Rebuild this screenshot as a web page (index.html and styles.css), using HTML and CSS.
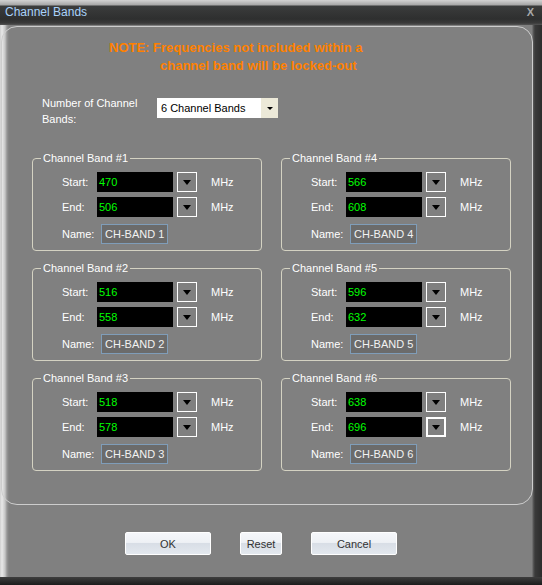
FILE: index.html
```html
<!DOCTYPE html>
<html lang="en">
<head>
    <meta charset="UTF-8">
    <title>Channel Bands</title>
    <link rel="stylesheet" href="styles.css">
</head>
<body>
    <div class="window">
        <div class="titlebar">
            <span class="title">Channel Bands</span>
            <span class="close">X</span>
        </div>

        <div class="client">
            <div class="panel">
                <p class="note">
                    <span>NOTE: Frequencies not included within a</span>
                    <span class="note-second">channel band will be locked-out</span>
                </p>

                <div class="count-row">
                    <label class="count-label">Number of Channel Bands:</label>
                    <div class="combo">
                        <span class="combo-value">6 Channel Bands</span>
                        <span class="combo-arrow"><i class="tri-small"></i></span>
                    </div>
                </div>

                <div class="bands">
                    <fieldset class="band">
                        <legend>Channel Band #1</legend>
                        <div class="band-rows">
                            <span class="label">Start:</span><span class="freq">470</span><span class="drop-btn"><i class="tri"></i></span><span class="unit">MHz</span>
                            <span class="label">End:</span><span class="freq">506</span><span class="drop-btn"><i class="tri"></i></span><span class="unit">MHz</span>
                            <span class="label name-label">Name:</span><span class="name-field">CH-BAND 1</span>
                        </div>
                    </fieldset>

                    <fieldset class="band">
                        <legend>Channel Band #4</legend>
                        <div class="band-rows">
                            <span class="label">Start:</span><span class="freq">566</span><span class="drop-btn"><i class="tri"></i></span><span class="unit">MHz</span>
                            <span class="label">End:</span><span class="freq">608</span><span class="drop-btn"><i class="tri"></i></span><span class="unit">MHz</span>
                            <span class="label name-label">Name:</span><span class="name-field">CH-BAND 4</span>
                        </div>
                    </fieldset>

                    <fieldset class="band">
                        <legend>Channel Band #2</legend>
                        <div class="band-rows">
                            <span class="label">Start:</span><span class="freq">516</span><span class="drop-btn"><i class="tri"></i></span><span class="unit">MHz</span>
                            <span class="label">End:</span><span class="freq">558</span><span class="drop-btn"><i class="tri"></i></span><span class="unit">MHz</span>
                            <span class="label name-label">Name:</span><span class="name-field">CH-BAND 2</span>
                        </div>
                    </fieldset>

                    <fieldset class="band">
                        <legend>Channel Band #5</legend>
                        <div class="band-rows">
                            <span class="label">Start:</span><span class="freq">596</span><span class="drop-btn"><i class="tri"></i></span><span class="unit">MHz</span>
                            <span class="label">End:</span><span class="freq">632</span><span class="drop-btn"><i class="tri"></i></span><span class="unit">MHz</span>
                            <span class="label name-label">Name:</span><span class="name-field">CH-BAND 5</span>
                        </div>
                    </fieldset>

                    <fieldset class="band">
                        <legend>Channel Band #3</legend>
                        <div class="band-rows">
                            <span class="label">Start:</span><span class="freq">518</span><span class="drop-btn"><i class="tri"></i></span><span class="unit">MHz</span>
                            <span class="label">End:</span><span class="freq">578</span><span class="drop-btn"><i class="tri"></i></span><span class="unit">MHz</span>
                            <span class="label name-label">Name:</span><span class="name-field">CH-BAND 3</span>
                        </div>
                    </fieldset>

                    <fieldset class="band">
                        <legend>Channel Band #6</legend>
                        <div class="band-rows">
                            <span class="label">Start:</span><span class="freq">638</span><span class="drop-btn"><i class="tri"></i></span><span class="unit">MHz</span>
                            <span class="label">End:</span><span class="freq">696</span><span class="drop-btn focused"><i class="tri"></i></span><span class="unit">MHz</span>
                            <span class="label name-label">Name:</span><span class="name-field">CH-BAND 6</span>
                        </div>
                    </fieldset>
                </div>
            </div>

            <div class="actions">
                <button class="btn btn-wide">OK</button>
                <button class="btn">Reset</button>
                <button class="btn btn-wide">Cancel</button>
            </div>
        </div>

        <div class="window-bottom"></div>
    </div>
</body>
</html>
```

FILE: styles.css
```css
body {
    margin: 0;
    font-family: "Liberation Sans", Arial, sans-serif;
    font-size: 11px;
    background-color: #808080;
}

.window {
    width: 542px;
    height: 585px;
    display: flex;
    flex-direction: column;
    background: linear-gradient(to right, #cfcfcf 0, #e8e8e8 2px, #c6c6c6 5px, #959595 7px, #808080 9px, #808080 532px, #5c5c5c 533px, #3a3a3a 535px, #2c2c2c 542px);
}

/* title bar */
.titlebar {
    height: 25px;
    box-sizing: border-box;
    padding: 5px 8px 0 5px;
    display: flex;
    justify-content: space-between;
    background: linear-gradient(to bottom, #d2d2d2 0, #a6a6a6 5px, #3b3c3c 6px, #2e2f2f 19px, #3a3a3a 23px, #555 25px);
}

.title {
    color: #a9d2fa;
    font-size: 12px;
    line-height: 14px;
}

.close {
    color: #a8a8a8;
    font-weight: bold;
    font-size: 11px;
    line-height: 14px;
}

.client {
    flex: 1;
    display: flex;
    flex-direction: column;
}

.panel {
    height: 479px;
    box-sizing: border-box;
    margin: 1px 9px 0 1px;
    padding-top: 12px;
    border: 1px solid #cdcdcd;
    border-radius: 16px;
}

.note {
    margin: 0 0 0 107px;
    color: #ff8000;
    font-weight: bold;
    font-size: 13px;
    line-height: 18px;
}

.note span {
    display: block;
}

.note-second {
    padding-left: 51px;
}

/* number of bands */
.count-row {
    display: flex;
    align-items: flex-start;
    margin: 20px 0 0 40px;
}

.count-label {
    width: 115px;
    color: #fff;
    line-height: 16px;
    padding-right: 10px;
    box-sizing: border-box;
}

.combo {
    margin-top: 3px;
    width: 121px;
    height: 20px;
    display: flex;
    background: #fff;
}

.combo-value {
    flex: 1;
    padding-left: 4px;
    line-height: 20px;
    color: #000;
}

.combo-arrow {
    width: 17px;
    background: #ece9d8;
    display: flex;
    align-items: center;
    justify-content: center;
}

.tri-small {
    border-left: 3px solid transparent;
    border-right: 3px solid transparent;
    border-top: 3px solid #000;
}

/* band groups */
.bands {
    display: grid;
    grid-template-columns: 230px 230px;
    column-gap: 19px;
    row-gap: 11px;
    margin: 25px 0 0 30px;
}

.band {
    margin: 0;
    padding: 7px 0 6px 8px;
    min-width: 0;
    border: 1px solid #d4d2c2;
    border-radius: 4px;
}

.band legend {
    padding: 0 2px;
    color: #fff;
    font-size: 11px;
    line-height: 13px;
}

.band-rows {
    display: grid;
    grid-template-columns: 31px 76px 20px auto;
    column-gap: 4px;
    row-gap: 5px;
    align-items: center;
    padding-left: 21px;
}

.label {
    color: #fff;
}

.freq {
    height: 20px;
    box-sizing: border-box;
    padding-left: 2px;
    line-height: 20px;
    background: #000;
    color: #00ff00;
}

.drop-btn {
    width: 20px;
    height: 20px;
    box-sizing: border-box;
    border: 1px solid #fff;
    display: flex;
    align-items: center;
    justify-content: center;
}

.drop-btn.focused {
    border-width: 2px;
}

.tri {
    border-left: 4px solid transparent;
    border-right: 4px solid transparent;
    border-top: 5px solid #000;
}

.unit {
    margin-left: 10px;
    color: #fff;
}

.name-label {
    margin-top: 2px;
}

.name-field {
    grid-column: 2 / span 3;
    width: 67px;
    height: 20px;
    box-sizing: border-box;
    margin: 2px 0 0 4px;
    padding-left: 3px;
    border: 1px solid #7f9db9;
    background: #6b6b6b;
    color: #f2f2f2;
    font-size: 11px;
    line-height: 18px;
    white-space: nowrap;
}

/* dialog buttons */
.actions {
    display: flex;
    gap: 29px;
    margin-top: 27px;
    padding-left: 125px;
}

.btn {
    height: 23px;
    width: 42px;
    padding: 0;
    font-family: "Liberation Sans", Arial, sans-serif;
    font-size: 11px;
    color: #333;
    border: 1px solid #fff;
    border-radius: 2px;
    background: linear-gradient(to bottom, #f5f7fa 0%, #eef1f5 45%, #d8dee6 50%, #e3e8ee 100%);
}

.btn-wide {
    width: 86px;
}

.window-bottom {
    height: 8px;
    background: linear-gradient(to bottom, #3e3e3e, #1c1c1c);
}
```
